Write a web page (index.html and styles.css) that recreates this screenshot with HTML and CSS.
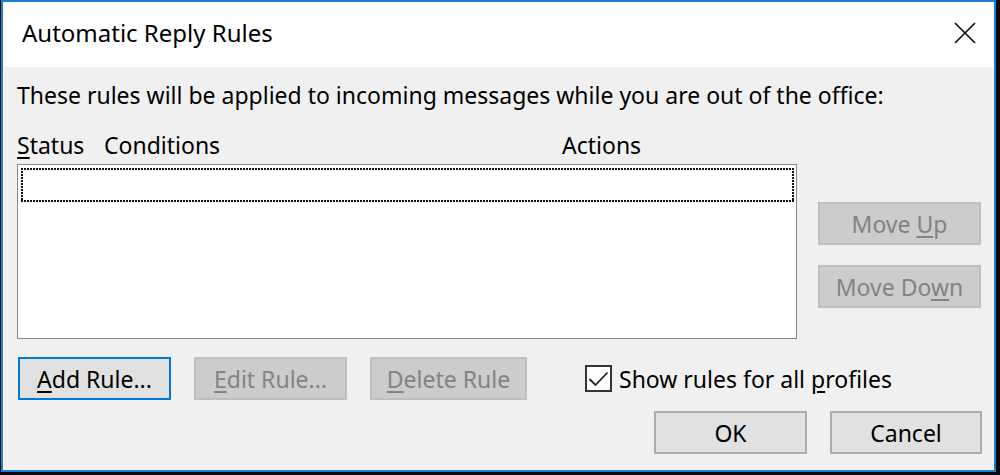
FILE: index.html
```html
<!DOCTYPE html>
<html>
<head>
<meta charset="utf-8">
<link rel="stylesheet" href="styles.css">
</head>
<body>
<div class="window">
  <div class="frame">
    <div class="inner">
      <div class="titlebar">
        <div class="title">Automatic Reply Rules</div>
        <svg class="close" width="24" height="24" viewBox="0 0 24 24"><path d="M2 2 L22 22 M22 2 L2 22" stroke="#111" stroke-width="1.7" fill="none"/></svg>
      </div>
      <div class="content">
        <div class="intro">These rules will be applied to incoming messages while you are out of the office:</div>
        <div class="main">
          <div class="list-col">
            <div class="headers">
              <span class="h-status"><u>S</u>tatus</span>
              <span class="h-cond">Conditions</span>
              <span class="h-act">Actions</span>
            </div>
            <div class="listbox">
              <div class="focus-row"></div>
            </div>
          </div>
          <div class="side">
            <div class="btn disabled wide"><span>Move <u>U</u>p</span></div>
            <div class="btn disabled wide"><span>Move Do<u>w</u>n</span></div>
          </div>
        </div>
        <div class="actions-row">
          <div class="btn default"><span><u>A</u>dd Rule...</span></div>
          <div class="btn disabled"><span><u>E</u>dit Rule...</span></div>
          <div class="btn disabled del"><span><u>D</u>elete Rule</span></div>
          <label class="check">
            <span class="box"><svg width="23" height="23" viewBox="0 0 23 23"><path d="M2.5 12 L8.5 18 L20.5 5.5" stroke="#222" stroke-width="1.8" fill="none"/></svg></span>
            <span class="check-text">Show rules for all <u>p</u>rofiles</span>
          </label>
        </div>
        <div class="footer">
          <div class="btn normal"><span>OK</span></div>
          <div class="btn normal"><span>Cancel</span></div>
        </div>
      </div>
    </div>
  </div>
</div>
</body>
</html>
```

FILE: styles.css
```css
html, body {
  margin: 0;
  padding: 0;
  background: #0a0a0a;
}
.window {
  width: 1000px;
  height: 475px;
  box-sizing: border-box;
  border-left: 1px solid #0a0a0a;
  border-right: 4px solid #0a0a0a;
  border-bottom: 3px solid #0a0a0a;
  font-family: "Noto Sans", "Open Sans", sans-serif;
  color: #000;
}
.frame {
  height: 100%;
  box-sizing: border-box;
  border: 2px solid #1a7fd6;
}
.inner {
  height: 100%;
  box-sizing: border-box;
  border: 1px solid #fbf9f3;
  border-top: 0;
  background: #f0f0f0;
  display: flex;
  flex-direction: column;
}
.titlebar {
  height: 65px;
  background: #fff;
  display: flex;
  align-items: center;
  justify-content: space-between;
  padding: 0 16px 0 18px;
  flex: none;
}
.title {
  font-size: 24px;
  margin-top: -4px;
}
.close {
  margin-top: -4px;
}
.content {
  padding: 14px 11px 0 13px;
  font-size: 23px;
}
.intro {
  line-height: 28px;
  height: 28px;
  white-space: nowrap;
}
.main {
  display: flex;
  gap: 21px;
  margin-top: 22px;
}
.list-col {
  width: 780px;
}
.headers {
  display: flex;
  height: 28px;
  line-height: 28px;
  margin-bottom: 5px;
}
.h-status { width: 87px; }
.h-cond { width: 458px; }
.listbox {
  height: 175px;
  box-sizing: border-box;
  border: 1px solid #828790;
  background: #fff;
  padding: 3px 2px 0 3px;
}
.focus-row {
  height: 34px;
  background-image:
    repeating-linear-gradient(to right, #111 0 2px, transparent 2px 3px),
    repeating-linear-gradient(to right, #111 0 2px, transparent 2px 3px),
    repeating-linear-gradient(to bottom, #111 0 2px, transparent 2px 3px),
    repeating-linear-gradient(to bottom, #111 0 2px, transparent 2px 3px);
  background-size: 100% 2px, 100% 2px, 2px 100%, 2px 100%;
  background-position: left top, left bottom, left top, right top;
  background-repeat: no-repeat;
}
.side {
  width: 163px;
  padding-top: 71px;
  display: flex;
  flex-direction: column;
  gap: 20px;
}
.btn {
  height: 43px;
  box-sizing: border-box;
  display: flex;
  align-items: center;
  justify-content: center;
  border: 2px solid #adadad;
  background: #e1e1e1;
  width: 153px;
  white-space: nowrap;
}
.btn.wide { width: 163px; }
.btn.disabled {
  background: #cccccc;
  border-color: #bfbfbf;
  color: #838383;
}
.btn.default {
  border-color: #0078d7;
}
.btn.del { width: 157px; }
.actions-row {
  display: flex;
  align-items: center;
  gap: 23px;
  margin-top: 18px;
  margin-left: 1px;
}
.check {
  display: flex;
  align-items: center;
  gap: 7px;
  margin-left: 35px;
}
.box {
  width: 27px;
  height: 27px;
  box-sizing: border-box;
  border: 2px solid #333;
  background: #fff;
  display: flex;
}
.footer {
  display: flex;
  justify-content: flex-end;
  gap: 23px;
  margin-top: 11px;
}
.footer .btn { width: 153px; }
.footer .btn:last-child { width: 152px; }
u {
  text-decoration-thickness: 1.5px;
  text-underline-offset: 3px;
}
```
